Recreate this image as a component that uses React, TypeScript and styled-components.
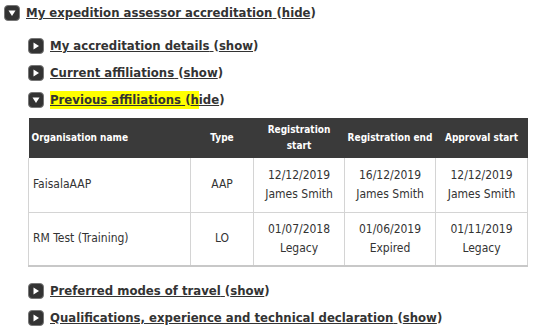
import React from 'react';
import styled, { createGlobalStyle } from 'styled-components';

interface Affiliation {
  name: string;
  type: string;
  start: [string, string];
  end: [string, string];
  approval: [string, string];
}

const affiliations: Affiliation[] = [
  {
    name: 'FaisalaAAP',
    type: 'AAP',
    start: ['12/12/2019', 'James Smith'],
    end: ['16/12/2019', 'James Smith'],
    approval: ['12/12/2019', 'James Smith'],
  },
  {
    name: 'RM Test (Training)',
    type: 'LO',
    start: ['01/07/2018', 'Legacy'],
    end: ['01/06/2019', 'Expired'],
    approval: ['01/11/2019', 'Legacy'],
  },
];

const GlobalStyle = createGlobalStyle`
  body {
    margin: 0;
    background: #fff;
    color: #333;
    font-family: 'DejaVu Sans Condensed', 'DejaVu Sans', sans-serif;
  }
`;

const Toggle = ({ open }: { open: boolean }) => (
  <ToggleBox>
    <svg width="8" height="8" viewBox="0 0 8 8">
      {open ? <polygon points="0.5,1.5 7.5,1.5 4,7" fill="#fff" /> : <polygon points="1.5,0.5 1.5,7.5 7,4" fill="#fff" />}
    </svg>
  </ToggleBox>
);

const Section = ({ title, open, highlight }: { title: string; open: boolean; highlight?: boolean }) => {
  const action = open ? 'hide' : 'show';
  return (
    <SectionRow>
      <Toggle open={open} />
      {highlight ? (
        <Label>
          <Mark>
            <Link href="#">{title} </Link>(<Link href="#">h</Link>
          </Mark>
          <Link href="#">ide</Link>)
        </Label>
      ) : (
        <Label>
          <Link href="#">{title} </Link>(<Link href="#">{action}</Link>)
        </Label>
      )}
    </SectionRow>
  );
};

const TwoLine = ({ lines }: { lines: [string, string] }) => (
  <>
    {lines[0]}
    <br />
    {lines[1]}
  </>
);

const App = () => {
  return (
    <Page>
      <GlobalStyle />
      <Section title="My expedition assessor accreditation" open />
      <SubList>
        <Section title="My accreditation details" open={false} />
        <Section title="Current affiliations" open={false} />
        <Section title="Previous affiliations" open highlight />
        <Table>
          <thead>
            <tr>
              <HeadCell $align="left" $width={162}>Organisation name</HeadCell>
              <HeadCell $width={63}>Type</HeadCell>
              <HeadCell $width={91}>
                Registration
                <br />
                start
              </HeadCell>
              <HeadCell $width={91}>Registration end</HeadCell>
              <HeadCell $width={92}>Approval start</HeadCell>
            </tr>
          </thead>
          <tbody>
            {affiliations.map((a) => (
              <tr key={a.name}>
                <Cell $align="left">{a.name}</Cell>
                <Cell>{a.type}</Cell>
                <Cell>
                  <TwoLine lines={a.start} />
                </Cell>
                <Cell>
                  <TwoLine lines={a.end} />
                </Cell>
                <Cell>
                  <TwoLine lines={a.approval} />
                </Cell>
              </tr>
            ))}
          </tbody>
        </Table>
        <Section title="Preferred modes of travel" open={false} />
        <Section title="Qualifications, experience and technical declaration" open={false} />
      </SubList>
    </Page>
  );
};

export default App;

const Page = styled.div`
  padding: 4px 4px;
`;

const SubList = styled.div`
  margin-left: 24px;
  margin-top: 16px;
  display: flex;
  flex-direction: column;
`;

const SectionRow = styled.div`
  display: flex;
  align-items: center;
  gap: 6px;
  height: 17px;
  margin-bottom: 10px;
`;

const ToggleBox = styled.span`
  width: 16px;
  height: 16px;
  box-sizing: border-box;
  border-radius: 4px;
  background: #333;
  border: 1px solid #777;
  display: inline-flex;
  align-items: center;
  justify-content: center;
  flex-shrink: 0;
`;

const Label = styled.span`
  font-size: 13px;
  font-weight: bold;
  color: #333;
  white-space: nowrap;
`;

const Link = styled.a`
  color: #333;
  text-decoration: underline;
`;

const Mark = styled.span`
  background: #ffff00;
  padding: 1px 0 2px;
`;

const Table = styled.table`
  width: 500px;
  border-collapse: collapse;
  margin: 0 0 15px;
  border-bottom: 2px solid #c8c8c8;
`;

const HeadCell = styled.th<{ $align?: string; $width: number }>`
  width: ${(p) => p.$width}px;
  height: 40px;
  box-sizing: border-box;
  background: #3a3a3a;
  color: #fff;
  font-size: 10px;
  font-weight: bold;
  line-height: 16px;
  padding: 0 3px;
  white-space: nowrap;
  text-align: ${(p) => p.$align || 'center'};
`;

const Cell = styled.td<{ $align?: string }>`
  height: 54px;
  box-sizing: border-box;
  border: 1px solid #d4d4d4;
  border-top: none;
  font-size: 12px;
  line-height: 19px;
  color: #333;
  padding: 0 4px;
  text-align: ${(p) => p.$align || 'center'};
`;
